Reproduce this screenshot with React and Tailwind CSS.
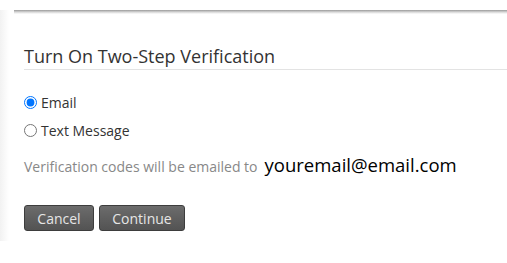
export default function App() {
  return (
    <div className="w-[507px] h-[263px] bg-white pt-[10px] overflow-hidden" style={{ fontFamily: '"Open Sans", sans-serif' }}>
      <div className="flex h-[231px]">
        <div className="w-[9px] bg-gradient-to-r from-[#f2f2f2] to-white" />
        <div className="flex-1 flex flex-col">
          <div className="ml-[5px] h-[4px] bg-gradient-to-b from-[#9a9a9a] via-[#d5d5d5] to-white" />
          <div className="pl-[15px]">
            <h2 className="mt-[30px] text-[18px] leading-[24px] text-[#333] pb-[1px] border-b border-[#e3e3e3]">
              Turn On Two-Step Verification
            </h2>
            <div className="mt-[22px] flex flex-col gap-[8px] text-[14px] text-[#333]">
              <label className="flex items-center gap-[4px] h-[20px]">
                <input type="radio" name="method" defaultChecked className="m-0 w-[13px] h-[13px] accent-[#0075ff]" />
                Email
              </label>
              <label className="flex items-center gap-[4px] h-[20px]">
                <input type="radio" name="method" className="m-0 w-[13px] h-[13px]" />
                Text Message
              </label>
            </div>
            <p className="mt-[13px] flex items-baseline text-[14px] text-[#888]">
              Verification codes will be emailed to
              <span className="ml-[7px] text-[18.5px] leading-[24px] text-black">youremail@email.com</span>
            </p>
            <div className="mt-[28px] flex gap-[5px]">
              <button className="w-[70px] h-[26px] rounded-[3px] border border-[#3d3d3d] bg-gradient-to-b from-[#6c6c6c] to-[#535353] text-[14px] text-[#e6e6e6]">
                Cancel
              </button>
              <button className="w-[86px] h-[26px] rounded-[3px] border border-[#3d3d3d] bg-gradient-to-b from-[#6c6c6c] to-[#535353] text-[14px] text-[#e6e6e6]">
                Continue
              </button>
            </div>
          </div>
        </div>
      </div>
    </div>
  );
}
